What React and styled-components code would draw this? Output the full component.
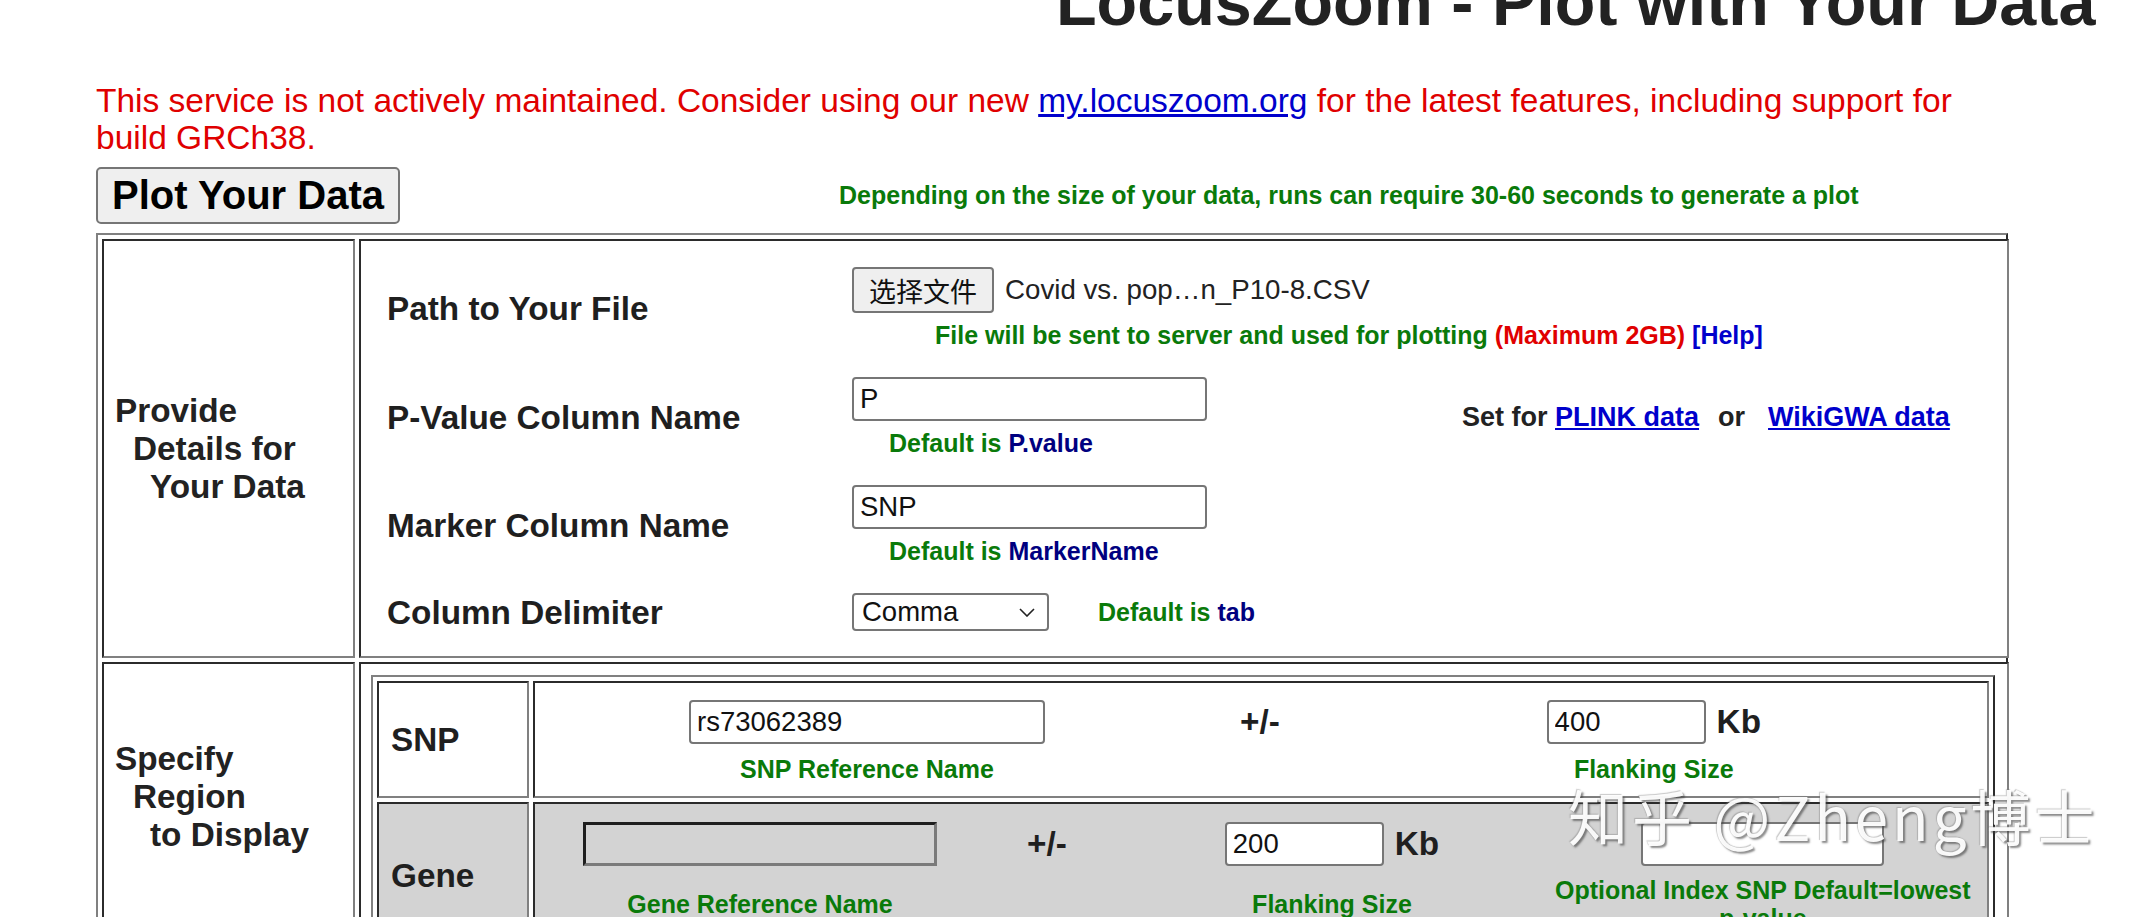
import styled, { createGlobalStyle } from 'styled-components';

const GlobalStyle = createGlobalStyle`
  html, body {
    margin: 0;
    background: #fff;
    overflow: hidden;
  }
  body {
    font-family: "Liberation Sans", Arial, sans-serif;
    color: #222;
  }
`;

const App = () => {
    return (
        <Root>
            <GlobalStyle />
            <Title>LocusZoom - Plot with Your Data</Title>
            <Notice>
                This service is not actively maintained. Consider using our new{' '}
                <a href="#">my.locuszoom.org</a> for the latest features, including support for build GRCh38.
            </Notice>

            <TopBar>
                <PlotButton type="button">Plot Your Data</PlotButton>
                <Hint>Depending on the size of your data, runs can require 30-60 seconds to generate a plot</Hint>
            </TopBar>

            <OuterTable>
                <SideCell>
                    <SideLine $indent={0}>Provide</SideLine>
                    <SideLine $indent={18}>Details for</SideLine>
                    <SideLine $indent={35}>Your Data</SideLine>
                </SideCell>
                <Cell>
                    <FormGrid>
                        <FieldLabel>Path to Your File</FieldLabel>
                        <Field>
                            <FileRow>
                                <FileButton type="button">选择文件</FileButton>
                                <FileName>Covid vs. pop…n_P10-8.CSV</FileName>
                            </FileRow>
                            <Note $indent={83}>
                                File will be sent to server and used for plotting{' '}
                                <Warn>(Maximum 2GB)</Warn> <HelpLink href="#">[Help]</HelpLink>
                            </Note>
                        </Field>
                        <div />

                        <FieldLabel>P-Value Column Name</FieldLabel>
                        <Field>
                            <TextInput $w={355} defaultValue="P" />
                            <Note $indent={37}>Default is <Value>P.value</Value></Note>
                        </Field>
                        <Presets>
                            Set for <PresetLink href="#">PLINK data</PresetLink>
                            <Or>or</Or>
                            <PresetLink href="#">WikiGWA data</PresetLink>
                        </Presets>

                        <FieldLabel>Marker Column Name</FieldLabel>
                        <Field>
                            <TextInput $w={355} defaultValue="SNP" />
                            <Note $indent={37}>Default is <Value>MarkerName</Value></Note>
                        </Field>
                        <div />

                        <FieldLabel>Column Delimiter</FieldLabel>
                        <DelimiterRow>
                            <SelectBox>
                                <span>Comma</span>
                                <svg width="16" height="9" viewBox="0 0 16 9">
                                    <path d="M1 1 L8 8 L15 1" fill="none" stroke="#222" strokeWidth="1.6" />
                                </svg>
                            </SelectBox>
                            <Note $indent={0} $flat>Default is <Value>tab</Value></Note>
                        </DelimiterRow>
                        <div />
                    </FormGrid>
                </Cell>

                <SideCell $top>
                    <SideLine $indent={0}>Specify</SideLine>
                    <SideLine $indent={18}>Region</SideLine>
                    <SideLine $indent={35}>to Display</SideLine>
                </SideCell>
                <RegionCell>
                    <InnerTable>
                        <RowLabel>SNP</RowLabel>
                        <Cell>
                            <SnpGrid>
                                <TextInput $w={356} defaultValue="rs73062389" />
                                <PlusMinus>+/-</PlusMinus>
                                <KbGroup>
                                    <TextInput $w={159} defaultValue="400" />
                                    <Kb>Kb</Kb>
                                </KbGroup>
                                <Caption>SNP Reference Name</Caption>
                                <div />
                                <Caption>Flanking Size</Caption>
                            </SnpGrid>
                        </Cell>

                        <RowLabel $shade>Gene</RowLabel>
                        <Cell $shade>
                            <GeneGrid>
                                <TextInput $w={354} $inset />
                                <PlusMinus>+/-</PlusMinus>
                                <KbGroup>
                                    <TextInput $w={159} defaultValue="200" />
                                    <Kb>Kb</Kb>
                                </KbGroup>
                                <TextInput $w={243} />
                                <Caption>Gene Reference Name</Caption>
                                <div />
                                <Caption>Flanking Size</Caption>
                                <Caption>Optional Index SNP Default=lowest<br />p-value</Caption>
                            </GeneGrid>
                        </Cell>
                    </InnerTable>
                </RegionCell>
            </OuterTable>

            <Watermark>知乎 @Zheng博士</Watermark>
        </Root>
    );
};

export default App;

const Root = styled.div`
  position: relative;
  padding-left: 96px;
  width: 1912px;
`;

const Title = styled.h1`
  margin: -31px 0 0 960px;
  font-size: 66.5px;
  line-height: 66px;
  font-weight: bold;
  white-space: nowrap;
  color: #222;
`;

const Notice = styled.p`
  margin: 47px 0 0;
  font-size: 33.5px;
  line-height: 37px;
  color: #e00000;

  > a {
    color: #0000cc;
    text-decoration: underline;
  }
`;

const TopBar = styled.div`
  display: flex;
  align-items: center;
  margin-top: 11px;
`;

const PlotButton = styled.button`
  width: 304px;
  height: 57px;
  padding: 0;
  font-family: "Liberation Sans", Arial, sans-serif;
  font-size: 40px;
  font-weight: bold;
  color: #000;
  background: #efefef;
  border: 2px solid #767676;
  border-radius: 5px;
`;

const Hint = styled.span`
  margin-left: 439px;
  font-size: 25px;
  font-weight: bold;
  color: #0a7a0a;
`;

const OuterTable = styled.div`
  margin-top: 9px;
  display: grid;
  grid-template-columns: 253px 1fr;
  gap: 4px;
  padding: 4px;
  border: 2px solid;
  border-color: #808080 #2b2b2b #2b2b2b #808080;
`;

const Cell = styled.div`
  border: 2px solid;
  border-color: #2b2b2b #808080 #808080 #2b2b2b;
  background: ${p => (p.$shade ? '#d3d3d3' : '#fff')};
`;

const SideCell = styled(Cell)`
  display: flex;
  flex-direction: column;
  justify-content: ${p => (p.$top ? 'flex-start' : 'center')};
  padding: ${p => (p.$top ? '76px 0 0 11px' : '0 0 0 11px')};
  font-size: 33.3px;
  font-weight: bold;
  line-height: 38px;
`;

const SideLine = styled.div`
  padding-left: ${p => p.$indent}px;
  white-space: nowrap;
`;

const FormGrid = styled.div`
  display: grid;
  grid-template-columns: 465px 610px 1fr;
  row-gap: 28px;
  align-items: center;
  padding: 26px 0 25px 26px;
`;

const FieldLabel = styled.div`
  font-size: 33.3px;
  font-weight: bold;
  line-height: 37px;
  color: #1f1f1f;
`;

const Field = styled.div`
  display: flex;
  flex-direction: column;
  align-items: flex-start;
`;

const FileRow = styled.div`
  display: flex;
  align-items: center;
  gap: 11px;
`;

const FileButton = styled.button`
  width: 142px;
  height: 46px;
  padding: 0;
  font-family: "Liberation Sans", "Noto Sans CJK SC", sans-serif;
  font-size: 27px;
  color: #111;
  background: #efefef;
  border: 2px solid #767676;
  border-radius: 4px;
`;

const FileName = styled.span`
  font-size: 27.7px;
  color: #222;
  white-space: nowrap;
`;

const Note = styled.div`
  margin-top: ${p => (p.$flat ? 0 : 8)}px;
  margin-left: ${p => p.$indent}px;
  font-size: 25px;
  font-weight: bold;
  line-height: 28px;
  color: #0a7a0a;
  white-space: nowrap;
`;

const Warn = styled.span`
  color: #e00000;
`;

const HelpLink = styled.a`
  color: #0000cc;
  text-decoration: none;
`;

const Value = styled.span`
  color: #000080;
`;

const Presets = styled.div`
  font-size: 27px;
  font-weight: bold;
  color: #222;
  white-space: nowrap;
`;

const PresetLink = styled.a`
  color: #0000cc;
  text-decoration: underline;
`;

const Or = styled.span`
  margin: 0 23px 0 19px;
`;

const DelimiterRow = styled.div`
  display: flex;
  align-items: center;
  gap: 49px;
`;

const SelectBox = styled.div`
  box-sizing: border-box;
  width: 197px;
  height: 38px;
  display: flex;
  align-items: center;
  justify-content: space-between;
  padding: 0 12px 0 8px;
  font-size: 27.5px;
  color: #111;
  background: #fff;
  border: 2px solid #767676;
  border-radius: 4px;
`;

const TextInput = styled.input`
  box-sizing: border-box;
  width: ${p => p.$w}px;
  height: 44px;
  padding: 0 6px;
  font-family: "Liberation Sans", Arial, sans-serif;
  font-size: 27.5px;
  color: #111;
  outline: none;
  background: ${p => (p.$inset ? 'transparent' : '#fff')};
  border: ${p => (p.$inset ? '3px solid' : '2px solid #767676')};
  border-color: ${p => (p.$inset ? '#1e1e1e #7a7a7a #7a7a7a #1e1e1e' : '#767676')};
  border-radius: ${p => (p.$inset ? 0 : 4)}px;
`;

const RegionCell = styled(Cell)`
  padding: 11px 12px 11px 10px;
`;

const InnerTable = styled.div`
  display: grid;
  grid-template-columns: 152px 1fr;
  gap: 4px;
  padding: 4px;
  border: 2px solid;
  border-color: #808080 #2b2b2b #2b2b2b #808080;
`;

const RowLabel = styled(Cell)`
  display: flex;
  align-items: center;
  padding-left: 12px;
  font-size: 33.3px;
  font-weight: bold;
  color: #1f1f1f;
`;

const SnpGrid = styled.div`
  display: grid;
  grid-template-columns: 664px 122px 1fr;
  row-gap: 11px;
  justify-items: center;
  align-items: center;
  padding: 17px 0 13px;
`;

const GeneGrid = styled.div`
  display: grid;
  grid-template-columns: 450px 124px 446px 1fr;
  grid-template-rows: 44px 56px;
  row-gap: 10px;
  justify-items: center;
  align-items: center;
  padding: 18px 16px 16px 0;
`;

const PlusMinus = styled.span`
  font-size: 33.3px;
  font-weight: bold;
  color: #1f1f1f;
`;

const KbGroup = styled.div`
  display: flex;
  align-items: center;
  gap: 11px;
`;

const Kb = styled.span`
  font-size: 33.3px;
  font-weight: bold;
  color: #1f1f1f;
`;

const Caption = styled.div`
  font-size: 25px;
  font-weight: bold;
  line-height: 28px;
  color: #0a7a0a;
  text-align: center;
  white-space: nowrap;
`;

const Watermark = styled.div`
  position: absolute;
  left: 1568px;
  top: 811px;
  font-family: "Noto Sans CJK SC", sans-serif;
  font-size: 60px;
  line-height: 70px;
  letter-spacing: 4px;
  color: rgba(255, 255, 255, 0.95);
  text-shadow: 2px 2px 2px rgba(60, 60, 60, 0.6), -1px -1px 1px rgba(120, 120, 120, 0.4);
  white-space: nowrap;
  pointer-events: none;
`;
